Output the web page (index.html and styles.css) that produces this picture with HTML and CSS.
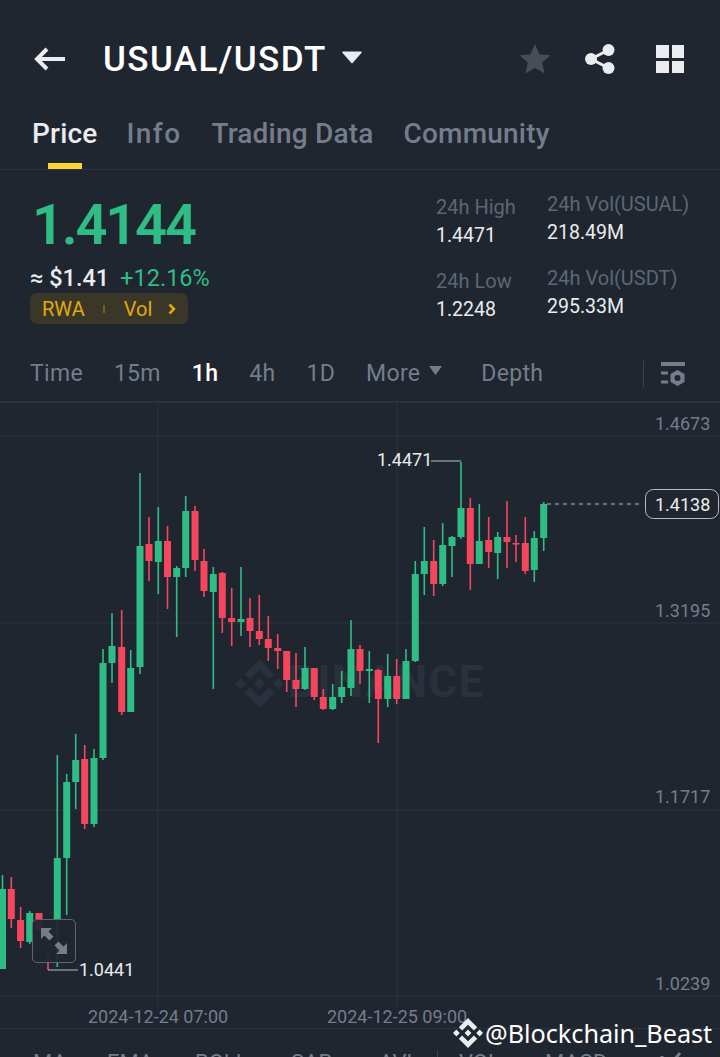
FILE: index.html
```html
<!DOCTYPE html>
<html lang="en">
<head>
  <meta charset="UTF-8" />
  <meta name="viewport" content="width=device-width, initial-scale=1.0" />
  <title>USUAL/USDT</title>
  <link rel="stylesheet" href="styles.css">
</head>
<body>
  <svg class="defs" width="0" height="0">
    <symbol id="bnb" viewBox="0 0 126.61 126.61">
      <path d="M38.73 53.2l24.59-24.58 24.6 24.6 14.3-14.31L63.32 0 24.42 38.9z M0 63.31l14.3-14.31 14.31 14.31-14.31 14.3z M38.73 73.41l24.59 24.59 24.6-24.6 14.31 14.29-38.9 38.91-38.91-38.88z M98 63.31l14.3-14.31 14.31 14.3-14.31 14.31z M77.83 63.3L63.32 48.78 52.59 59.51l-1.24 1.23-2.54 2.54 14.51 14.5 14.51-14.47z"/>
    </symbol>
  </svg>

  <header class="top-bar">
    <svg class="back-icon" width="32" height="26" viewBox="0 0 32 26"><path d="M31 13H4M13 3L3 13l10 10"/></svg>
    <h1 class="pair">USUAL/USDT</h1>
    <svg class="caret" width="20" height="14" viewBox="0 0 20 14"><path d="M1 1.5h18a.8.8 0 0 1 .6 1.3L10.6 13a.8.8 0 0 1-1.2 0L.4 2.8A.8.8 0 0 1 1 1.5z"/></svg>
    <div class="top-actions">
      <svg class="star" width="32" height="32" viewBox="0 0 32 32"><path d="M16 1l4.500 10.200 11 1.100-8.300 7.300 2.400 10.800L16 24.800 6.400 30.400l2.400-10.800L.5 12.300l11-1.100z"/></svg>
      <svg class="share" width="30" height="30" viewBox="0 0 30 30"><circle cx="23.500" cy="6" r="6"/><circle cx="6" cy="15" r="6"/><circle cx="23.500" cy="24" r="6"/><path d="M23.500 6L6 15l17.500 9"/></svg>
      <div class="grid-icon"><span></span><span></span><span></span><span></span></div>
    </div>
  </header>

  <nav class="tabs">
    <a class="tab active">Price</a>
    <a class="tab info">Info</a>
    <a class="tab">Trading Data</a>
    <a class="tab">Community</a>
  </nav>

  <section class="summary">
    <div class="price-box">
      <div class="last-price">1.4144</div>
      <div class="price-line"><span class="fiat">≈ $1.41</span><span class="change">+12.16%</span></div>
      <div class="chip"><span>RWA</span><i class="chip-sep"></i><span>Vol</span>
        <svg width="8" height="12" viewBox="0 0 8 12"><path d="M1.500 1.500L6 6l-4.500 4.500"/></svg>
      </div>
    </div>
    <div class="stats">
      <div class="stat-col">
        <div class="stat-label">24h High</div>
        <div class="stat-value">1.4471</div>
        <div class="stat-label">24h Low</div>
        <div class="stat-value">1.2248</div>
      </div>
      <div class="stat-col shifted">
        <div class="stat-label">24h Vol(USUAL)</div>
        <div class="stat-value">218.49M</div>
        <div class="stat-label">24h Vol(USDT)</div>
        <div class="stat-value">295.33M</div>
      </div>
    </div>
  </section>

  <div class="intervals">
    <span>Time</span>
    <span>15m</span>
    <span class="current">1h</span>
    <span>4h</span>
    <span>1D</span>
    <span class="more">More<svg width="13" height="9" viewBox="0 0 13 9"><path d="M0 0h13L6.500 9z"/></svg></span>
    <span class="depth">Depth</span>
    <i class="interval-sep"></i>
    <svg class="settings" width="24" height="24" viewBox="0 0 24 24"><path d="M0 0h24v4H0zM0 9.500h7v3H0zM0 18.500h7v3H0z"/><path fill-rule="evenodd" d="M16.500 8l7 4v8l-7 4-7-4v-8zM16.500 13a3 3 0 1 0 0 6 3 3 0 0 0 0-6z"/></svg>
  </div>

  <div class="chart">
    <svg class="chart-svg" width="720" height="625" viewBox="0 403 720 625">
      <path class="grid" d="M0 436H720M0 623H720M0 810H720M0 996H720M158 403V1006M397 403V1006"/>

      <use class="mark" href="#bnb" x="235" y="659" width="49" height="49"/>
      <text class="mark-text" x="288" y="697">BINANCE</text>

      <path class="wick up" d="M2.500 875V969M29.700 911V944M57.300 755V967M66.700 774V915M75.700 734V809M94 749V827M103 649V760M112 613V683M130.700 650V712M140 473V674M158.300 507V594M176.700 566V637M185.700 496V577M213.300 567V689M241 567V636M305 647V690M332.700 684V710M341.700 671V703M351 620V696M369.300 651V703M387.700 654V707M406 649V699M415.300 561V662M424.300 527V595M442.700 523V586M452 536V577M461 462V539M479.300 504V564M497.700 532V579M534.300 531V582M543.700 502V551"/>
      <path class="body up" d="M2.500 889V969M29.700 913V942M57.300 858V919M66.700 782V858M75.700 760V782M94 758V824M103 663V758M112 646V663M130.700 668V712M140 546V667M158.300 541V562M176.700 568V577M185.700 511V568M213.300 574V592M241 619V622M305 668V689M332.700 697V709M341.700 687V697M351 649V688M369.300 669V671M387.700 676V699M406 661V699M415.300 574V661M424.300 561V574M442.700 545V584M452 537V546M461 508V537M479.300 541V564M497.700 537V553M534.300 538V570M543.700 504V538"/>
      <path class="wick down" d="M11.300 877V928M20.600 907V948M39 913V930M48 955V970M84.700 745V829M121.700 610V715M149 517V581M167.500 526V609M195 506V571M204 549V597M222.300 572V633M231.700 588V646M250 598V647M259.300 595V645M268.300 616V661M277.700 634V669M286.700 651V692M296 653V707M314.300 668V700M323.300 689V710M360 645V684M378.300 669V743M396.700 659V704M433.700 540V596M470.300 498V590M488.700 517V568M507 501V568M516 535V562M525.300 517V574"/>
      <path class="body down" d="M11.300 889V919M20.600 920V941M39 913V930M84.700 759V824M121.700 647V712M149 544V561M167.500 541V577M195 511V560M204 561V591M222.300 573V618M231.700 618V622M250 618V631M259.300 631V639M268.300 639V648M277.700 648V651M286.700 651V680M296 680V689M314.300 668V697M323.300 697V709M360 649V671M378.300 670V699M396.700 676V699M433.700 561V584M470.300 508V564M488.700 540V552M507 537V542M516 543V544.500M525.300 543V571"/>

      <path class="marker" d="M431 461H461M48 970H78"/>
      <text class="marker-text" x="377" y="466">1.4471</text>
      <text class="marker-text" x="79" y="976">1.0441</text>

      <path class="last-line" d="M547 504H642"/>
      <rect class="last-pill" x="645.500" y="489.500" width="73" height="29" rx="8"/>
      <text class="marker-text" x="655" y="511">1.4138</text>

      <text class="axis" x="655" y="430">1.4673</text>
      <text class="axis" x="655" y="617">1.3195</text>
      <text class="axis" x="655" y="803">1.1717</text>
      <text class="axis" x="655" y="990">1.0239</text>
      <text class="axis date" x="88" y="1023">2024-12-24 07:00</text>
      <text class="axis date" x="327" y="1023">2024-12-25 09:00</text>
    </svg>
    <button class="expand">
      <svg width="26" height="26" viewBox="0 0 26 26"><path d="M0 0h11L7.500 3.500 12.500 8.500 8.500 12.500 3.500 7.500 0 11zM26 26H15l3.500-3.500-5-5 4-4 5 5L26 15z"/></svg>
    </button>
  </div>

  <div class="indicators">
    <span class="ind-ma">MA</span>
    <span class="ind-ema">EMA</span>
    <span class="ind-boll">BOLL</span>
    <span class="ind-sar">SAR</span>
    <span class="ind-avl">AVL</span>
    <i class="ind-sep"></i>
    <span class="ind-vol">VOL</span>
    <span class="ind-macd">MACD</span>
    <svg class="ind-icon" width="22" height="14" viewBox="0 0 22 14"><path d="M2 14V4M9 14L20 1M12 7l8 7"/></svg>
  </div>

  <div class="watermark">
    <svg width="30" height="30"><use href="#bnb" width="30" height="30"/></svg>
    <span>@Blockchain_Beast</span>
  </div>
</body>
</html>
```

FILE: styles.css
```css
:root {
  --bg-color: #1f2630;
  --line-color: #2c323c;
  --text-color: #eaecef;
  --muted: #767d8a;
  --green: #2ebd85;
  --red: #f6465d;
}

body {
  margin: 0;
  width: 720px;
  height: 1057px;
  overflow: hidden;
  position: relative;
  background: var(--bg-color);
  color: var(--text-color);
  font-family: Roboto, "Noto Sans", sans-serif;
}

.defs {
  position: absolute;
}

/* top bar */
.top-bar {
  display: flex;
  align-items: center;
  height: 118px;
  padding: 0 36px 0 34px;
}

.back-icon {
  margin-right: 37px;
  fill: none;
  stroke: #eaecef;
  stroke-width: 4;
}

.pair {
  margin: 0 15px 0 0;
  font-size: 35px;
  letter-spacing: 1.4px;
  font-weight: 500;
  color: #fff;
}

.caret {
  margin-bottom: 4px;
  fill: #eaecef;
}

.top-actions {
  display: flex;
  align-items: center;
  margin-left: auto;
}

.star {
  margin-right: 34px;
  fill: #474d57;
}

.share {
  margin-right: 41px;
  fill: #eaecef;
}

.share path {
  fill: none;
  stroke: #eaecef;
  stroke-width: 3;
}

.grid-icon {
  display: grid;
  grid-template-columns: 12.5px 12.5px;
  grid-template-rows: 12.5px 12.5px;
  gap: 3px;
}

.grid-icon span {
  background: #eaecef;
}

/* tabs */
.tabs {
  display: flex;
  gap: 30px;
  height: 51px;
  padding-left: 32px;
  border-bottom: 1px solid var(--line-color);
}

.tab {
  position: relative;
  font-size: 28px;
  letter-spacing: 0.2px;
  line-height: 32px;
  font-weight: 500;
  color: var(--muted);
}

.tab.info {
  letter-spacing: 1.4px;
}

.tab.active {
  color: #eaecef;
  margin-right: -1px;
}

.tab.active::after {
  content: "";
  position: absolute;
  left: 16px;
  right: 16px;
  bottom: 0;
  height: 6px;
  background: #fcd535;
}

/* price summary */
.summary {
  display: flex;
  justify-content: space-between;
  height: 180px;
  padding-left: 30px;
}

.last-price {
  margin: 22px 0 0 2px;
  font-size: 56px;
  letter-spacing: -2.2px;
  line-height: 66px;
  font-weight: 600;
  color: var(--green);
}

.price-line {
  display: flex;
  align-items: baseline;
  gap: 11px;
  margin-top: 5px;
  line-height: 30px;
}

.fiat {
  font-size: 23.500px;
  font-weight: 500;
}

.change {
  font-size: 23.500px;
  color: var(--green);
}

.chip {
  display: flex;
  align-items: center;
  width: 158px;
  height: 31px;
  padding-left: 12px;
  box-sizing: border-box;
  border-radius: 7px;
  background: #3a3729;
  font-size: 20px;
  color: #e0a90f;
}

.chip-sep {
  width: 2px;
  height: 8px;
  margin: 0 18.500px;
  background: #6d5e24;
}

.chip svg {
  margin-left: 16px;
  fill: none;
  stroke: #e0a90f;
  stroke-width: 2.500;
}

.stats {
  display: flex;
  width: 284px;
}

.stat-col {
  width: 111px;
  padding-top: 23px;
}

.stat-col.shifted {
  padding-top: 20px;
  width: 173px;
}

.stat-label {
  font-size: 20px;
  line-height: 28px;
  color: #5e6673;
}

.stat-value {
  height: 46px;
  padding-top: 1px;
  box-sizing: border-box;
  font-size: 19.500px;
  line-height: 28px;
  color: #eaecef;
}

/* interval row */
.intervals {
  display: flex;
  align-items: center;
  gap: 31px;
  height: 47px;
  padding: 0 0 4px 30px;
  border-bottom: 2px solid var(--line-color);
  font-size: 23px;
  letter-spacing: 0.3px;
  color: var(--muted);
}

.intervals .current {
  color: #fff;
  font-weight: 500;
}

.more svg {
  margin: 0 0 6px 9px;
  fill: var(--muted);
}

.depth {
  margin-left: 8px;
}

.interval-sep {
  width: 1px;
  height: 26px;
  margin-left: 69px;
  background: #3c424c;
}

.settings {
  margin-left: -14px;
  fill: var(--muted);
}

/* chart */
.chart {
  position: relative;
  height: 625px;
  border-bottom: 1px solid var(--line-color);
}

.chart-svg {
  display: block;
}

.grid {
  fill: none;
  stroke: var(--line-color);
  stroke-width: 1;
}

.mark {
  fill: #2b313c;
}

.mark-text {
  font-size: 44px;
  letter-spacing: 1.5px;
  font-weight: 700;
  fill: #2b313c;
}

.wick {
  fill: none;
  stroke-width: 1.600;
}

.body {
  fill: none;
  stroke-width: 7;
}

.up {
  stroke: var(--green);
}

.down {
  stroke: var(--red);
}

.marker {
  fill: none;
  stroke: #b7bdc6;
  stroke-width: 1;
}

.marker-text {
  font-size: 18px;
  fill: #eaecef;
}

.last-line {
  fill: none;
  stroke: #b7bdc6;
  stroke-width: 1;
  stroke-dasharray: 4 4;
}

.last-pill {
  fill: var(--bg-color);
  stroke: #b7bdc6;
  stroke-width: 1;
}

.axis {
  font-size: 18px;
  fill: var(--muted);
}

.expand {
  position: absolute;
  left: 32px;
  top: 516px;
  width: 44px;
  height: 44px;
  padding: 0;
  display: flex;
  align-items: center;
  justify-content: center;
  background: rgba(31, 38, 48, 0.92);
  border: 1px solid #5e6673;
  border-radius: 5px;
}

.expand svg {
  fill: #767d8a;
}

/* indicator row, cut off by the window */
.indicators {
  position: relative;
  height: 40px;
  font-size: 22px;
  color: var(--muted);
}

.indicators span {
  position: absolute;
  top: 21px;
}

.ind-ma { left: 33px; }
.ind-ema { left: 107px; }
.ind-boll { left: 195px; }
.ind-sar { left: 291px; }
.ind-avl { left: 379px; }
.ind-vol { left: 459px; }
.ind-macd { left: 545px; }

.ind-sep {
  position: absolute;
  left: 437px;
  top: 21px;
  width: 1px;
  height: 26px;
  background: #3c424c;
}

.ind-icon {
  position: absolute;
  left: 660px;
  top: 23px;
  fill: none;
  stroke: var(--muted);
  stroke-width: 3;
}

/* screenshot credit over the page */
.watermark {
  position: absolute;
  left: 453px;
  top: 1018px;
  display: flex;
  align-items: center;
  gap: 2px;
  color: #fff;
  font-family: "Noto Sans", sans-serif;
  font-size: 25.200px;
  line-height: 30px;
}

.watermark svg {
  fill: #eaecef;
}
```
